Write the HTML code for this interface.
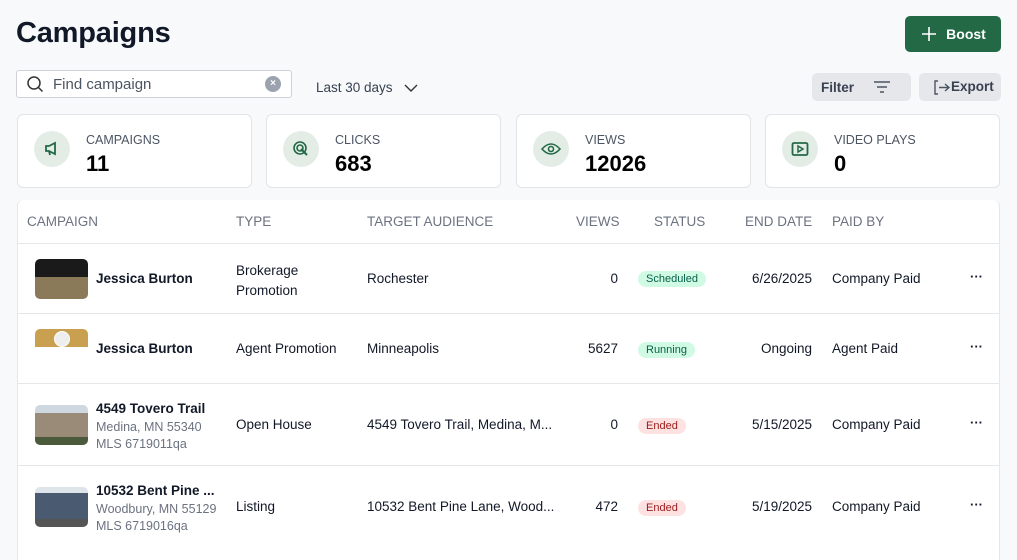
<!DOCTYPE html><html><head><style>
*{box-sizing:border-box;margin:0;padding:0}
body{width:1017px;height:547px;overflow:hidden;background:#f8f9fb;font-family:"Liberation Sans",sans-serif;color:#111827;position:relative}
.a{position:absolute}
h1{position:absolute;left:16px;top:17px;font-size:29px;font-weight:700;color:#111827;letter-spacing:-0.2px}
.card{position:absolute;top:114px;width:235px;height:74px;background:#fff;border:1px solid #e2e4e8;border-radius:6px}
.card .ic{position:absolute;left:16px;top:16px;width:36px;height:36px;border-radius:50%;background:#e3ede6;display:flex;align-items:center;justify-content:center}
.card .l{position:absolute;left:68px;top:18px;font-size:12.5px;color:#4b5563}
.card .v{position:absolute;left:68px;top:36px;font-size:22px;font-weight:700;color:#000}
.tbl{position:absolute;left:17px;top:200px;width:983px;height:360px;background:#fff;border-left:1px solid #e5e7eb;border-right:1px solid #e5e7eb;border-radius:6px 6px 0 0}
.hd{position:absolute;top:214px;font-size:13.5px;color:#6b7280}
.line{position:absolute;left:17px;width:983px;height:1px;background:#e5e7eb}
.t{position:absolute;font-size:13.5px;color:#111827;white-space:nowrap}
.r{text-align:right}
.b{font-weight:700}
.s{color:#6b7280;font-size:12.5px}
.pill{position:absolute;font-size:11px;padding:2px 8px;border-radius:9px;left:638px}
.thumb{position:absolute;left:35px;width:53px;height:40px;border-radius:5px;overflow:hidden}
.dots{position:absolute;left:970px;font-size:13px;font-weight:700;letter-spacing:0}
</style></head><body>
<h1>Campaigns</h1>
<div class="a" style="left:905px;top:16px;width:96px;height:36px;background:#236946;border-radius:5px;color:#fff;font-weight:700;font-size:14px;display:flex;align-items:center;justify-content:center;gap:8px"><svg width="18" height="18" viewBox="0 0 18 18"><path d="M9 2v14M2 9h14" stroke="#fff" stroke-width="1.6"/></svg>Boost</div>
<div class="a" style="left:16px;top:70px;width:276px;height:28px;background:#fff;border:1px solid #cfd3d8;border-radius:3px"></div>
<svg class="a" style="left:26px;top:75px" width="18" height="18" viewBox="0 0 18 18"><circle cx="8" cy="8" r="6" fill="none" stroke="#333" stroke-width="1.5"/><path d="M12.5 12.5l4 4" stroke="#333" stroke-width="1.5"/></svg>
<div class="t" style="left:53px;top:76px;font-size:15px;color:#4b5563">Find campaign</div>
<div class="a" style="left:265px;top:76px;width:16px;height:16px;border-radius:50%;background:#9ca3af;color:#fff;font-size:10px;text-align:center;line-height:16px;font-weight:700">×</div>
<div class="t" style="left:316px;top:80px;font-size:13.5px;color:#374151">Last 30 days</div>
<svg class="a" style="left:403px;top:82px" width="16" height="12" viewBox="0 0 16 12"><path d="M2 3l6 6 6-6" fill="none" stroke="#333" stroke-width="1.4"/></svg>
<div class="a" style="left:812px;top:73px;width:99px;height:28px;background:#e6e7eb;border-radius:5px"></div>
<div class="t" style="left:821px;top:80px;font-size:13.5px;color:#374151;font-weight:700">Filter</div>
<svg class="a" style="left:872px;top:80px" width="20" height="14" viewBox="0 0 20 14"><path d="M2 2h16M5 7h10M8 12h4" stroke="#4b5563" stroke-width="1.5"/></svg>
<div class="a" style="left:919px;top:73px;width:82px;height:28px;background:#e6e7eb;border-radius:5px"></div>
<svg class="a" style="left:932px;top:79px" width="20" height="17" viewBox="0 0 20 17"><path d="M6 2H3v13h3M7 8.5h10M13 5l4 3.5-4 3.5" fill="none" stroke="#4b5563" stroke-width="1.4"/></svg>
<div class="t" style="left:951px;top:79px;font-size:13.5px;color:#374151;font-weight:700">Export</div>
<div class="card" style="left:17px"><div class="ic"><svg width="18" height="16" viewBox="0 0 18 16"><path d="M3 5h3l6-3v11l-6-3H3z M6 10l1 4" fill="none" stroke="#236946" stroke-width="1.8"/></svg></div><div class="l">CAMPAIGNS</div><div class="v">11</div></div>
<div class="card" style="left:266px"><div class="ic"><svg width="18" height="18" viewBox="0 0 18 18"><circle cx="8" cy="8" r="6" fill="none" stroke="#236946" stroke-width="1.6"/><circle cx="8" cy="8" r="3" fill="none" stroke="#236946" stroke-width="1.6"/><path d="M9 9l6 6" stroke="#236946" stroke-width="2"/></svg></div><div class="l">CLICKS</div><div class="v">683</div></div>
<div class="card" style="left:516px"><div class="ic"><svg width="20" height="14" viewBox="0 0 20 14"><path d="M1 7q9-10 18 0q-9 10-18 0z" fill="none" stroke="#236946" stroke-width="1.6"/><circle cx="10" cy="7" r="2.5" fill="none" stroke="#236946" stroke-width="1.6"/></svg></div><div class="l">VIEWS</div><div class="v">12026</div></div>
<div class="card" style="left:765px"><div class="ic"><svg width="18" height="16" viewBox="0 0 18 16"><rect x="1.5" y="2" width="15" height="12" rx="1.5" fill="none" stroke="#236946" stroke-width="1.8"/><path d="M7 5v6l5-3z" fill="none" stroke="#236946" stroke-width="1.5"/></svg></div><div class="l">VIDEO PLAYS</div><div class="v">0</div></div>
<div class="tbl"></div>
<div class="hd" style="left:27px">CAMPAIGN</div><div class="hd" style="left:236px">TYPE</div><div class="hd" style="left:367px">TARGET AUDIENCE</div><div class="hd" style="left:576px">VIEWS</div><div class="hd" style="left:654px">STATUS</div><div class="hd" style="left:745px">END DATE</div><div class="hd" style="left:832px">PAID BY</div>
<div class="line" style="top:243px"></div><div class="line" style="top:313px"></div><div class="line" style="top:383px"></div><div class="line" style="top:465px"></div>
<div class="thumb" style="top:259px;background:linear-gradient(180deg,#1a1a1a 0 45%,#8a7a5a 45% 100%)"></div>
<div class="t b" style="left:96px;top:271px">Jessica Burton</div>
<div class="t" style="left:236px;top:261px;line-height:20px">Brokerage<br>Promotion</div>
<div class="t" style="left:367px;top:271px">Rochester</div>
<div class="t r" style="left:518px;width:100px;top:271px">0</div>
<div class="pill" style="top:271px;background:#d1fae5;color:#065f46">Scheduled</div>
<div class="t r" style="left:712px;width:100px;top:271px">6/26/2025</div>
<div class="t" style="left:832px;top:271px">Company Paid</div>
<div class="dots" style="top:269px">···</div>
<div class="thumb" style="top:329px;background:linear-gradient(180deg,#c9a050 0 45%,#fff 45%)"><div style="position:absolute;left:19px;top:2px;width:16px;height:16px;border-radius:50%;background:#eee;border:1px solid #fff"></div></div>
<div class="t b" style="left:96px;top:341px">Jessica Burton</div>
<div class="t" style="left:236px;top:341px">Agent Promotion</div>
<div class="t" style="left:367px;top:341px">Minneapolis</div>
<div class="t r" style="left:518px;width:100px;top:341px">5627</div>
<div class="pill" style="top:342px;background:#d1fae5;color:#065f46">Running</div>
<div class="t r" style="left:712px;width:100px;top:341px">Ongoing</div>
<div class="t" style="left:832px;top:341px">Agent Paid</div>
<div class="dots" style="top:339px">···</div>
<div class="thumb" style="top:405px;background:linear-gradient(180deg,#cfd8e0 0 20%,#9a8a78 20% 80%,#4a5a3a 80%)"></div>
<div class="t b" style="left:96px;top:401px">4549 Tovero Trail</div>
<div class="t s" style="left:96px;top:420px">Medina, MN 55340</div>
<div class="t s" style="left:96px;top:437px">MLS 6719011qa</div>
<div class="t" style="left:236px;top:417px">Open House</div>
<div class="t" style="left:367px;top:417px">4549 Tovero Trail, Medina, M...</div>
<div class="t r" style="left:518px;width:100px;top:417px">0</div>
<div class="pill" style="top:418px;background:#fee2e2;color:#991b1b">Ended</div>
<div class="t r" style="left:712px;width:100px;top:417px">5/15/2025</div>
<div class="t" style="left:832px;top:417px">Company Paid</div>
<div class="dots" style="top:415px">···</div>
<div class="thumb" style="top:487px;background:linear-gradient(180deg,#dde4ea 0 15%,#4a5a70 15% 80%,#555 80%)"></div>
<div class="t b" style="left:96px;top:483px">10532 Bent Pine ...</div>
<div class="t s" style="left:96px;top:502px">Woodbury, MN 55129</div>
<div class="t s" style="left:96px;top:519px">MLS 6719016qa</div>
<div class="t" style="left:236px;top:499px">Listing</div>
<div class="t" style="left:367px;top:499px">10532 Bent Pine Lane, Wood...</div>
<div class="t r" style="left:518px;width:100px;top:499px">472</div>
<div class="pill" style="top:500px;background:#fee2e2;color:#991b1b">Ended</div>
<div class="t r" style="left:712px;width:100px;top:499px">5/19/2025</div>
<div class="t" style="left:832px;top:499px">Company Paid</div>
<div class="dots" style="top:497px">···</div>
</body></html>
